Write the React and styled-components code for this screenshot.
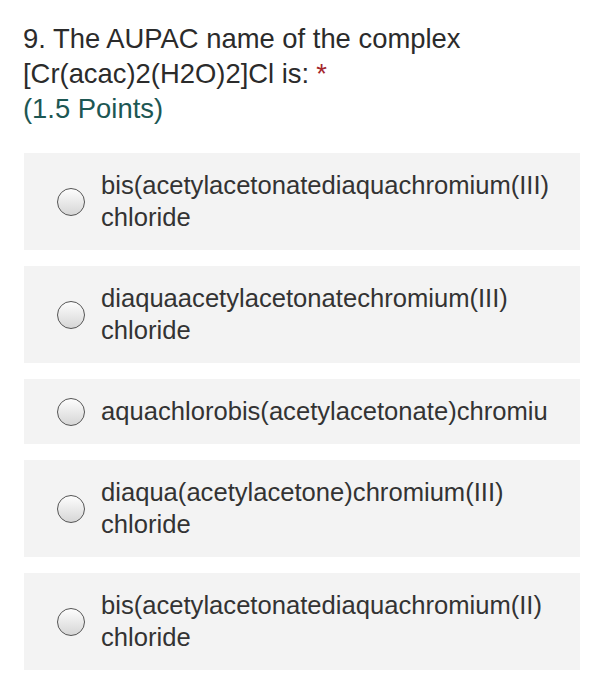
import React from 'react';
import styled, { createGlobalStyle } from 'styled-components';

const GlobalStyle = createGlobalStyle`
  body {
    margin: 0;
    background: #fff;
    font-family: "Liberation Sans", Arial, sans-serif;
    color: #333;
  }
`;

const Page = styled.div`
  padding: 21px 25px 0 23px;
`;

const Question = styled.div`
  font-size: 27.4px;
  line-height: 35px;
  color: #2b2b2b;
  margin-bottom: 27px;
`;

const Star = styled.span`
  color: #a4262c;
  margin-left: 7px;
`;

const Points = styled.div`
  color: #1d5753;
`;

const Options = styled.div`
  display: flex;
  flex-direction: column;
  gap: 16px;
  margin-left: 1px;
`;

const Option = styled.label`
  display: flex;
  align-items: center;
  gap: 16px;
  background: #f3f3f3;
  padding: 16px 32px 17px 33px;
  min-height: 32px;
`;

const Radio = styled.span`
  flex: 0 0 auto;
  width: 28px;
  height: 28px;
  border-radius: 50%;
  box-sizing: border-box;
  border: 1.5px solid #555;
  background: linear-gradient(#fdfdfd, #d6d6d6);
  margin-top: 2px;
`;

const Text = styled.span`
  flex: 1;
  min-width: 0;
  overflow: hidden;
  font-size: 25.6px;
  line-height: 32px;
  color: #333;
`;

const options = [
  'bis(acetylacetonatediaquachromium(III) chloride',
  'diaquaacetylacetonatechromium(III) chloride',
  'aquachlorobis(acetylacetonate)chromium(III)',
  'diaqua(acetylacetone)chromium(III) chloride',
  'bis(acetylacetonatediaquachromium(II) chloride',
];

export default function App() {
  return (
    <Page>
      <GlobalStyle />
      <Question>
        9. The AUPAC name of the complex
        <br />
        [Cr(acac)2(H2O)2]Cl is:<Star>*</Star>
        <Points>(1.5 Points)</Points>
      </Question>
      <Options>
        {options.map((o) => (
          <Option key={o}>
            <Radio />
            <Text>{o}</Text>
          </Option>
        ))}
      </Options>
    </Page>
  );
}
